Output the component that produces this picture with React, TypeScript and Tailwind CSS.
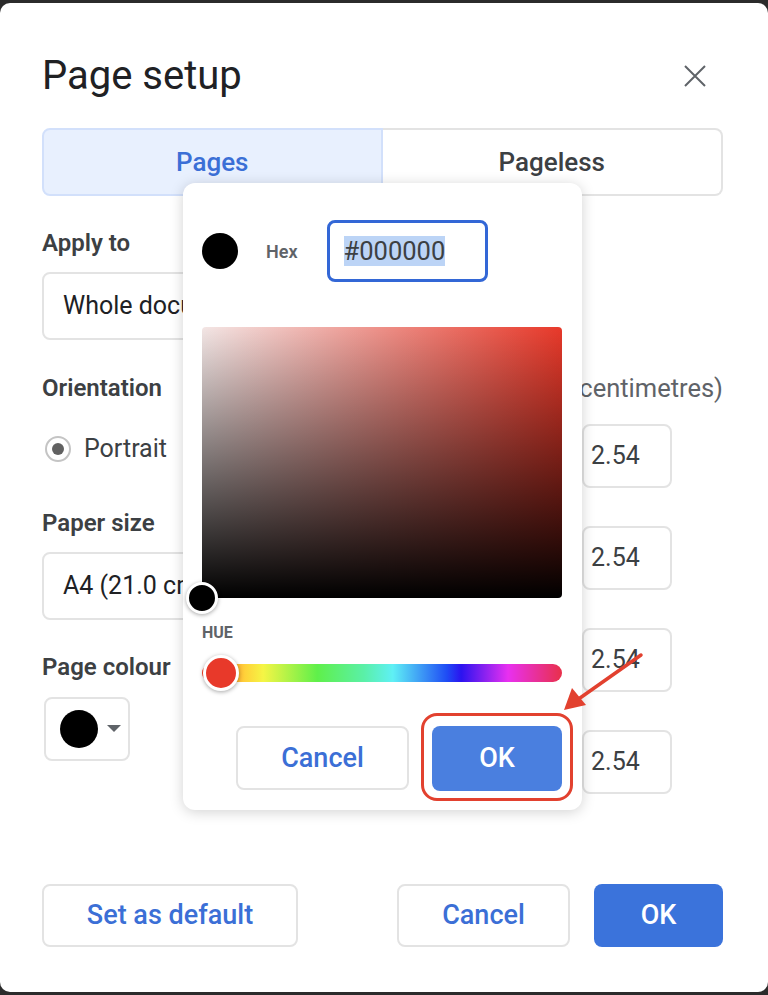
import React from "react";

const font = { fontFamily: "Roboto, 'Liberation Sans', Arial, sans-serif" };

function MarginInput({ value }: { value: string }) {
  return (
    <div className="flex justify-end pr-[51px]">
      <div className="flex h-[64px] w-[90px] items-center rounded-lg border-2 border-[#e3e3e3] px-[7px] text-[25px] text-[#3c4043]">
        {value}
      </div>
    </div>
  );
}

function ColourPicker() {
  return (
    <div className="absolute left-[183px] top-[183px] flex h-[627px] w-[399px] flex-col rounded-xl bg-white pl-[19px] pr-[20px] pt-[37px] shadow-[0_2px_14px_rgba(0,0,0,0.18)]">
      {/* hex row */}
      <div className="flex h-[62px] items-center">
        <div className="h-[36px] w-[36px] rounded-full bg-black" />
        <span className="ml-[28px] text-[18px] font-semibold text-[#5f6368]">Hex</span>
        <div className="ml-[29px] flex h-[62px] w-[161px] items-center rounded-lg border-[3px] border-[#3367d6] px-[14px]">
          <span className="bg-[#bcd4f6] text-[25.5px] leading-[30px] text-[#3c4043]">#000000</span>
        </div>
      </div>

      {/* saturation / value area */}
      <div
        className="relative mt-[45px] h-[271px] w-[360px] rounded-[4px]"
        style={{
          background:
            "linear-gradient(to top, #000 0%, rgba(0,0,0,0) 100%), linear-gradient(to right, #f3e6e5 0%, #e8392a 100%)",
        }}
      >
        <div className="absolute -bottom-[16px] -left-[16px] h-[32px] w-[32px] rounded-full border-[3px] border-white bg-black shadow-[0_1px_4px_rgba(0,0,0,0.35)]" />
      </div>

      <div className="mt-[25px] text-[16px] font-bold leading-[20px] text-[#5f6368]">HUE</div>

      {/* hue slider */}
      <div className="relative mt-[21px] h-[18px] w-[360px]">
        <div
          className="h-full w-full rounded-full"
          style={{
            background:
              "linear-gradient(to right, #ff3b1f 0%, #ffd23a 12%, #f5f545 17%, #5ff04a 32%, #5af0a8 45%, #5ff0f5 53%, #1f4cf5 68%, #2b13f0 72%, #e830f0 85%, #e8304a 100%)",
          }}
        />
        <div className="absolute left-[1px] top-1/2 h-[36px] w-[36px] -translate-y-1/2 rounded-full border-[3px] border-white bg-[#e8392a] shadow-[0_1px_4px_rgba(0,0,0,0.35)]" />
      </div>

      {/* actions */}
      <div className="mt-auto mb-[19px] flex justify-end gap-[23px]">
        <button className="h-[64px] w-[173px] rounded-lg border-2 border-[#e3e3e3] text-[27px] font-medium text-[#3b6fd6]">
          Cancel
        </button>
        <button className="h-[65px] w-[130px] rounded-lg bg-[#4a7fdf] text-[27px] font-medium text-white">
          OK
        </button>
      </div>
    </div>
  );
}

export default function App() {
  return (
    <div className="relative h-[995px] w-[768px] overflow-hidden bg-[#2b2b2b] py-[3px]" style={font}>
      <div className="flex h-full flex-col rounded-[10px] bg-white pl-[42px] pr-[45px]">
        {/* header */}
        <div className="mt-[45px] flex h-[56px] items-center justify-between">
          <h1 className="text-[40px] font-normal text-[#202124]">Page setup</h1>
          <svg width="24" height="24" viewBox="0 0 24 24" className="mr-[16px]">
            <path d="M2 2 L22 22 M22 2 L2 22" stroke="#5f6368" strokeWidth="2" fill="none" />
          </svg>
        </div>

        {/* tabs */}
        <div className="mt-[24px] grid h-[68px] grid-cols-2">
          <div className="flex items-center justify-center rounded-l-lg border-2 border-[#d2e0fb] bg-[#e8f0fe] text-[26px] font-medium text-[#3b6fd6]">
            Pages
          </div>
          <div className="flex items-center justify-center rounded-r-lg border-2 border-l-0 border-[#e3e3e3] text-[26px] font-medium text-[#3c4043]">
            Pageless
          </div>
        </div>

        {/* apply to */}
        <div className="mt-[32px] text-[24px] font-semibold leading-[30px] text-[#3c4043]">Apply to</div>
        <div className="mt-[14px] flex h-[68px] w-[340px] items-center rounded-lg border-2 border-[#e3e3e3] px-[19px] text-[25px] text-[#202124]">
          Whole document
        </div>

        <div className="mt-[33px] flex">
          {/* left column */}
          <div className="flex w-[330px] flex-col">
            <div className="text-[24px] font-semibold leading-[30px] text-[#3c4043]">Orientation</div>
            <div className="mt-[26px] flex h-[40px] items-center">
              <div className="ml-[3px] flex h-[26px] w-[26px] items-center justify-center rounded-full border-2 border-[#c4c4c4]">
                <div className="h-[12px] w-[12px] rounded-full bg-[#616161]" />
              </div>
              <span className="ml-[13px] text-[25px] text-[#3c4043]">Portrait</span>
            </div>

            <div className="mt-[39px] text-[24px] font-semibold leading-[30px] text-[#3c4043]">Paper size</div>
            <div className="mt-[14px] flex h-[68px] w-[340px] items-center rounded-lg border-2 border-[#e3e3e3] px-[19px] text-[25px] text-[#202124]">
              A4 (21.0 cm x 29.7 cm)
            </div>

            <div className="mt-[32px] text-[24px] font-semibold leading-[30px] text-[#3c4043]">Page colour</div>
            <div className="ml-[2px] mt-[15px] flex h-[64px] w-[86px] items-center rounded-lg border-2 border-[#e3e3e3] pl-[14px]">
              <div className="h-[38px] w-[38px] rounded-full bg-black" />
              <svg width="14" height="8" viewBox="0 0 14 8" className="ml-[9px]">
                <path d="M0 0 L14 0 L7 7 Z" fill="#5f6368" />
              </svg>
            </div>
          </div>

          {/* right column */}
          <div className="flex flex-1 flex-col">
            <div className="whitespace-nowrap text-right text-[25.5px] leading-[30px] text-[#5f6368]">Margins (centimetres)</div>
            <div className="mt-[21px] flex flex-col gap-[38px]">
              <MarginInput value="2.54" />
              <MarginInput value="2.54" />
              <MarginInput value="2.54" />
              <MarginInput value="2.54" />
            </div>
          </div>
        </div>

        {/* footer */}
        <div className="mt-auto mb-[45px] flex items-center">
          <button className="h-[63px] w-[256px] rounded-lg border-2 border-[#e3e3e3] text-[27px] font-medium text-[#3b6fd6]">
            Set as default
          </button>
          <button className="ml-auto h-[63px] w-[173px] rounded-lg border-2 border-[#e3e3e3] text-[27px] font-medium text-[#3b6fd6]">
            Cancel
          </button>
          <button className="ml-[24px] h-[63px] w-[129px] rounded-lg bg-[#3b73db] text-[27px] font-medium text-white">
            OK
          </button>
        </div>
      </div>

      <ColourPicker />

      {/* annotation */}
      <div className="pointer-events-none absolute left-[421px] top-[713px] h-[88px] w-[152px] rounded-[16px] border-[3px] border-[#e2412f]" />
      <svg className="pointer-events-none absolute left-0 top-0" width="768" height="995">
        <line x1="641" y1="655" x2="580" y2="698" stroke="#e2412f" strokeWidth="3.5" strokeLinecap="round" />
        <path d="M564 710 L572 688 L586 705 Z" fill="#e2412f" />
      </svg>
    </div>
  );
}
